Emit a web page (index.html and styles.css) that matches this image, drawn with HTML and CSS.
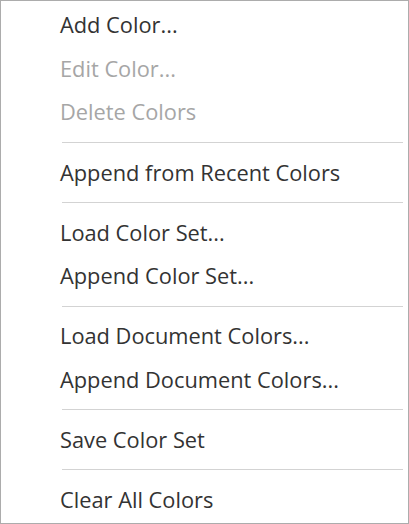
FILE: index.html
```html
<!DOCTYPE html>
<html lang="en">

<head>
    <meta charset="UTF-8" />
    <meta name="viewport" content="width=device-width, initial-scale=1.0" />
    <title>Color Set Menu</title>
    <link rel="stylesheet" href="styles.css">
</head>

<body>

    <ul class="menu">
        <li class="menu__item">Add Color...</li>
        <li class="menu__item menu__item--disabled">Edit Color...</li>
        <li class="menu__item menu__item--disabled">Delete Colors</li>
        <li class="menu__sep"></li>
        <li class="menu__item">Append from Recent Colors</li>
        <li class="menu__sep"></li>
        <li class="menu__item">Load Color Set...</li>
        <li class="menu__item">Append Color Set...</li>
        <li class="menu__sep"></li>
        <li class="menu__item">Load Document Colors...</li>
        <li class="menu__item">Append Document Colors...</li>
        <li class="menu__sep"></li>
        <li class="menu__item">Save Color Set</li>
        <li class="menu__sep"></li>
        <li class="menu__item">Clear All Colors</li>
    </ul>

</body>

</html>
```

FILE: styles.css
```css
body {
    margin: 0;
    background: #fff;
}

.menu {
    box-sizing: border-box;
    width: 409px;
    height: 524px;
    margin: 0;
    padding: 2px 0;
    list-style: none;
    background: #fff;
    border: 1px solid #acacac;
    font-family: "Open Sans", sans-serif;
    font-size: 21.8px;
    color: #333;
}

.menu__item {
    height: 43.6px;
    display: flex;
    align-items: center;
    padding-left: 59px;
}

.menu__item--disabled {
    color: #a6a6a6;
}

.menu__sep {
    height: 16.5px;
    box-sizing: border-box;
    padding: 8px 5px 0 61px;
}

.menu__sep::after {
    content: "";
    display: block;
    height: 1px;
    background: #d3d3d3;
}
```
